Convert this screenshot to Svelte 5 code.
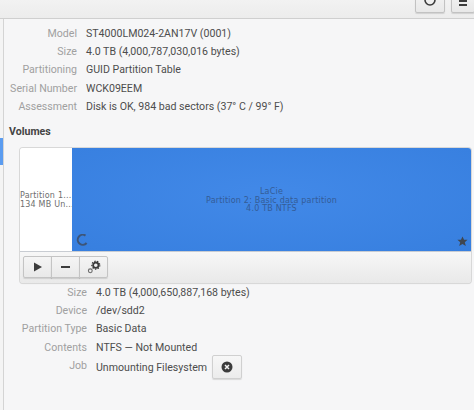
<script>
  // Drive details
  const driveRows = [
    ['Model', 'ST4000LM024-2AN17V (0001)'],
    ['Size', '4.0 TB (4,000,787,030,016 bytes)'],
    ['Partitioning', 'GUID Partition Table'],
    ['Serial Number', 'WCK09EEM'],
    ['Assessment', 'Disk is OK, 984 bad sectors (37° C / 99° F)']
  ];

  // Selected volume details
  const volumeRows = [
    ['Size', '4.0 TB (4,000,650,887,168 bytes)'],
    ['Device', '/dev/sdd2'],
    ['Partition Type', 'Basic Data'],
    ['Contents', 'NTFS — Not Mounted']
  ];
</script>

<div class="window">
  <header class="topbar">
    <button class="top-btn power" aria-label="Power">
      <svg width="14" height="14" viewBox="0 0 14 14"><circle cx="7" cy="5" r="5" fill="none" stroke="#3c3c3c" stroke-width="1.6" /></svg>
    </button>
    <button class="top-btn menu" aria-label="Menu">
      <span class="menu-bars"></span>
    </button>
  </header>

  <div class="main">
    <aside class="sidebar"><div class="selected"></div></aside>

    <div class="content">
      <dl class="rows drive">
        {#each driveRows as [label, value]}
          <dt>{label}</dt>
          <dd>{value}</dd>
        {/each}
      </dl>

      <h2>Volumes</h2>

      <div class="volumes">
        <div class="graph">
          <div class="part small">
            <span>Partition 1...</span>
            <span>134 MB Un...</span>
          </div>
          <div class="part big">
            <span>LaCie</span>
            <span>Partition 2: Basic data partition</span>
            <span>4.0 TB NTFS</span>
            <svg class="spinner" width="12" height="12" viewBox="0 0 12 12">
              <path d="M9.5 1.6A5 5 0 1 0 10.6 9" fill="none" stroke="#3d5578" stroke-width="2" />
            </svg>
            <svg class="star" width="11" height="11" viewBox="0 0 10 10">
              <path d="M5 .4l1.4 3h3.2L7.1 5.600l.9 3.600L5 7.300 2 9.200l.9-3.600L.4 3.400h3.200z" fill="#3f4650" />
            </svg>
          </div>
        </div>
        <div class="toolbar">
          <div class="group">
            <button aria-label="Mount">
              <svg width="10" height="10" viewBox="0 0 10 10"><path d="M1 .5L9 5 1 9.500z" fill="#3c3c3c" /></svg>
            </button>
            <button aria-label="Delete">
              <span class="minus"></span>
            </button>
            <button aria-label="Settings">
              <svg width="14" height="14" viewBox="0 0 14 14">
                <circle cx="8.800" cy="5.200" r="2.700" fill="none" stroke="#3c3c3c" stroke-width="1.800" />
                <circle cx="8.800" cy="5.200" r="4" fill="none" stroke="#3c3c3c" stroke-width="1.200" stroke-dasharray="1.400 1.400" />
                <circle cx="3.300" cy="10.800" r="1.900" fill="none" stroke="#6a6a6a" stroke-width="1.100" />
              </svg>
            </button>
          </div>
        </div>
      </div>

      <dl class="rows volume">
        {#each volumeRows as [label, value]}
          <dt>{label}</dt>
          <dd>{value}</dd>
        {/each}
        <dt class="job-label">Job</dt>
        <dd class="job">
          Unmounting Filesystem
          <button class="cancel" aria-label="Cancel">
            <svg width="12" height="12" viewBox="0 0 12 12">
              <circle cx="6" cy="6" r="5.500" fill="#3c3c3c" />
              <path d="M4 4l4 4M8 4l-4 4" stroke="#f4f4f4" stroke-width="1.500" />
            </svg>
          </button>
        </dd>
      </dl>
    </div>
  </div>
</div>

<style>
  :global(body) {
    margin: 0;
    background: #f6f6f7;
  }

  .window {
    width: 474px;
    height: 410px;
    overflow: hidden;
    display: flex;
    flex-direction: column;
    font-family: Roboto, "Noto Sans", sans-serif;
    font-size: 10.600px;
    color: #4a4a4a;
  }

  .topbar {
    height: 19px;
    flex: none;
    box-sizing: border-box;
    display: flex;
    justify-content: flex-end;
    align-items: flex-end;
    gap: 6px;
    padding-bottom: 5px;
    overflow: hidden;
    background: linear-gradient(#f2f2f2, #ececec);
    border-bottom: 1px solid #cfcfcf;
  }

  .top-btn {
    flex: none;
    height: 26px;
    padding: 0;
    display: flex;
    align-items: flex-end;
    justify-content: center;
    background: linear-gradient(#f7f7f7, #e8e8e8);
    border: 1px solid #c2c2c2;
    border-radius: 2px;
    box-shadow: 0 1px 1px rgba(0, 0, 0, 0.12);
  }

  .power {
    width: 30px;
    padding-bottom: 3px;
  }

  .menu {
    width: 24px;
    margin-right: -1px;
    padding-bottom: 6px;
  }

  .menu-bars {
    width: 8px;
    height: 6px;
    background: linear-gradient(#3c3c3c 0 2px, transparent 2px 4px, #3c3c3c 4px);
  }

  .main {
    flex: 1;
    display: flex;
  }

  .sidebar {
    width: 3px;
    flex: none;
    box-sizing: content-box;
    padding-top: 119px;
    border-right: 1px solid #d4d4d4;
    background: #f4f4f4;
  }

  .selected {
    height: 27px;
    background: #5b9cf0;
  }

  .content {
    flex: 1;
    min-width: 0;
    display: flex;
    flex-direction: column;
  }

  .rows {
    margin: 0;
    display: grid;
    column-gap: 9px;
    grid-auto-rows: 18.300px;
    align-items: center;
  }

  .drive {
    grid-template-columns: 73px 1fr;
    padding-top: 5px;
  }

  .volume {
    grid-template-columns: 83px 1fr;
    margin-top: 0;
  }

  dt {
    text-align: right;
    color: #a0a0a0;
    white-space: nowrap;
  }

  dd {
    margin: 0;
    color: #4d4d4d;
    white-space: nowrap;
  }

  h2 {
    margin: 8px 0 0 5px;
    height: 17px;
    line-height: 17px;
    font-size: 10.600px;
    font-weight: 700;
    color: #444;
  }

  .volumes {
    margin: 7.500px 3px 0 16px;
    height: 135px;
    flex: none;
    display: flex;
    flex-direction: column;
    border-radius: 3px;
    overflow: hidden;
    box-shadow: 0 0 0 1px #d8d8d8, 0 1px 1px rgba(0, 0, 0, 0.12);
  }

  .graph {
    height: 104px;
    flex: none;
    display: flex;
    border-bottom: 1px solid #c8ccd2;
    box-sizing: border-box;
    font-family: "DejaVu Sans", sans-serif;
    font-size: 8px;
    line-height: 8.700px;
  }

  .part {
    position: relative;
    display: flex;
    flex-direction: column;
    justify-content: center;
    padding-top: 3px;
  }

  .small {
    width: 52px;
    flex: none;
    background: #fff;
    color: #6e6e6e;
    white-space: nowrap;
    letter-spacing: 0.200px;
  }

  .big {
    flex: 1;
    align-items: center;
    background: radial-gradient(ellipse at 50% 45%, #4289e8, #377fdf);
    color: #345c96;
    letter-spacing: 0.200px;
  }

  .spinner {
    position: absolute;
    left: 4px;
    bottom: 5px;
  }

  .star {
    position: absolute;
    right: 3px;
    bottom: 4px;
  }

  .toolbar {
    flex: 1;
    display: flex;
    align-items: flex-start;
    padding: 4px 3px;
    background: linear-gradient(#f7f7f7, #e9e9e9);
  }

  .group {
    display: flex;
  }

  .group button {
    width: 29px;
    height: 22px;
    padding: 0;
    margin-right: -1px;
    display: flex;
    align-items: center;
    justify-content: center;
    background: linear-gradient(#f5f5f5, #e9e9e9);
    border: 1px solid #c4c4c4;
    box-shadow: 0 1px 1px rgba(0, 0, 0, 0.12);
  }

  .group button:first-child {
    border-radius: 2px 0 0 2px;
  }

  .group button:last-child {
    border-radius: 0 2px 2px 0;
  }

  .minus {
    width: 9px;
    height: 2px;
    background: #3c3c3c;
  }

  .job-label {
    align-self: start;
    margin-top: 3px;
  }

  .job {
    display: flex;
    align-items: center;
    gap: 5px;
    height: 24px;
    margin-top: 4px;
  }

  .cancel {
    width: 30px;
    height: 24px;
    padding: 0;
    display: flex;
    align-items: center;
    justify-content: center;
    background: linear-gradient(#f7f7f7, #ececec);
    border: 1px solid #d0d0d0;
    border-radius: 2px;
    box-shadow: 0 1px 1px rgba(0, 0, 0, 0.12);
  }
</style>
